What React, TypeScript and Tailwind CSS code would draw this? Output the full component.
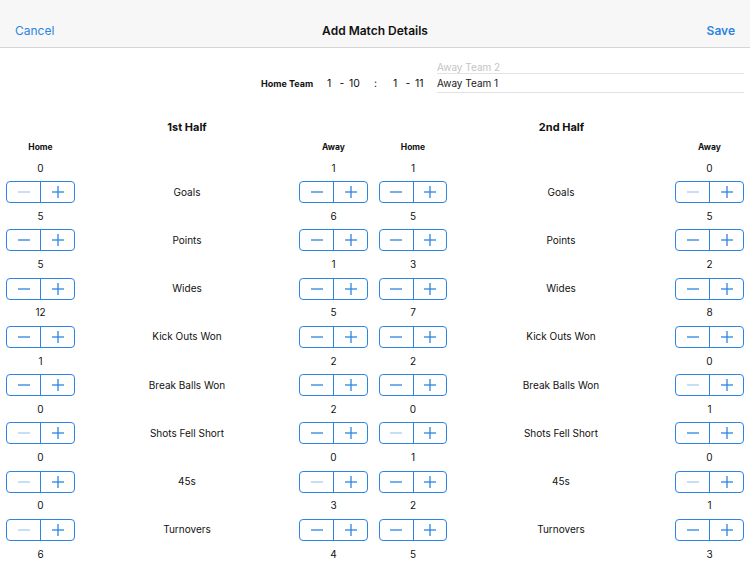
import React from "react";

const BLUE = "#2c84e4";

const stats = [
  "Goals",
  "Points",
  "Wides",
  "Kick Outs Won",
  "Break Balls Won",
  "Shots Fell Short",
  "45s",
  "Turnovers",
];

// values per column: home 1st, away 1st, home 2nd, away 2nd (last entry is the row cut off below)
const home1 = [0, 5, 5, 12, 1, 0, 0, 0, 6];
const away1 = [1, 6, 1, 5, 2, 2, 0, 3, 4];
const home2 = [1, 5, 3, 7, 2, 0, 1, 2, 5];
const away2 = [0, 5, 2, 8, 0, 1, 0, 1, 3];

const Stepper = ({ value }: { value: number }) => {
  const disabled = value === 0;
  return (
    <div className="flex h-[22px] w-[69px] rounded-[4px] border border-[#2c84e4]">
      <div className="flex flex-1 items-center justify-center border-r border-[#2c84e4]">
        <svg width="14" height="14" viewBox="0 0 14 14">
          <line x1="1" y1="7" x2="13" y2="7" stroke={disabled ? "#a8cdf3" : BLUE} strokeWidth="1.3" />
        </svg>
      </div>
      <div className="flex flex-1 items-center justify-center">
        <svg width="14" height="14" viewBox="0 0 14 14">
          <line x1="1" y1="7" x2="13" y2="7" stroke={BLUE} strokeWidth="1.3" />
          <line x1="7" y1="1" x2="7" y2="13" stroke={BLUE} strokeWidth="1.3" />
        </svg>
      </div>
    </div>
  );
};

const Value = ({ v }: { v: number }) => (
  <div className="flex h-[24px] items-center justify-center text-[10px] text-[#111]">{v}</div>
);

export default function App() {
  return (
    <div className="h-[563px] w-[750px] overflow-hidden bg-white font-['Inter',sans-serif]">
      <div className="flex h-[48px] items-end justify-between border-b border-[#d6d6d6] bg-[#f7f7f7] px-[15px] pb-[7px]">
        <span className="w-[80px] text-[12px] text-[#2c84e4]">Cancel</span>
        <span className="text-[12px] font-semibold text-[#111]">Add Match Details</span>
        <span className="w-[80px] text-right text-[12px] font-semibold text-[#2c84e4]">Save</span>
      </div>

      <div className="flex items-end pr-[6px] pt-[8px]">
        <div className="flex-1" />
        <div className="flex h-[19px] items-center text-[10.5px] text-[#111]">
          <span className="w-[66px] text-[9px] font-bold">Home Team</span>
          <span className="w-[8px]">1</span>
          <span className="w-[14px] text-center">-</span>
          <span className="w-[25px]">10</span>
          <span className="w-[19px]">:</span>
          <span className="w-[8px]">1</span>
          <span className="w-[14px] text-center">-</span>
          <span className="w-[22px]">11</span>
        </div>
        <div className="w-[307px] text-[10px]">
          <div className="flex h-[18px] items-end border-b border-[#e2e2e2] leading-[11px] text-[#c4c4c4]">Away Team 2</div>
          <div className="flex h-[19px] items-center border-b border-[#e2e2e2] text-[#222]">Away Team 1</div>
        </div>
      </div>

      <div className="grid grid-cols-[69px_224px_69px_11px_68px_228px_69px] pl-[6px] pt-[22px] text-[#111]">
        <div className="col-span-3 flex h-[24px] items-center justify-center text-[11px] font-bold">1st Half</div>
        <div />
        <div className="col-span-3 flex h-[24px] items-center justify-center text-[11px] font-bold">2nd Half</div>

        <div className="flex h-[17px] items-center justify-center text-[8.5px] font-bold">Home</div>
        <div />
        <div className="flex h-[17px] items-center justify-center text-[8.5px] font-bold">Away</div>
        <div />
        <div className="flex h-[17px] items-center justify-center text-[8.5px] font-bold">Home</div>
        <div />
        <div className="flex h-[17px] items-center justify-center text-[8.5px] font-bold">Away</div>

        {home1.map((_, i) => (
          <React.Fragment key={i}>
            <Value v={home1[i]} />
            <div />
            <Value v={away1[i]} />
            <div />
            <Value v={home2[i]} />
            <div />
            <Value v={away2[i]} />
            {i < stats.length && (
              <>
                <div className="flex h-[24.25px] items-center justify-center">
                  <Stepper value={home1[i]} />
                </div>
                <div className="flex items-center justify-center text-[10px]">{stats[i]}</div>
                <div className="flex items-center justify-center">
                  <Stepper value={away1[i]} />
                </div>
                <div />
                <div className="flex items-center justify-center">
                  <Stepper value={home2[i]} />
                </div>
                <div className="flex items-center justify-center text-[10px]">{stats[i]}</div>
                <div className="flex items-center justify-center">
                  <Stepper value={away2[i]} />
                </div>
              </>
            )}
          </React.Fragment>
        ))}
      </div>
    </div>
  );
}
